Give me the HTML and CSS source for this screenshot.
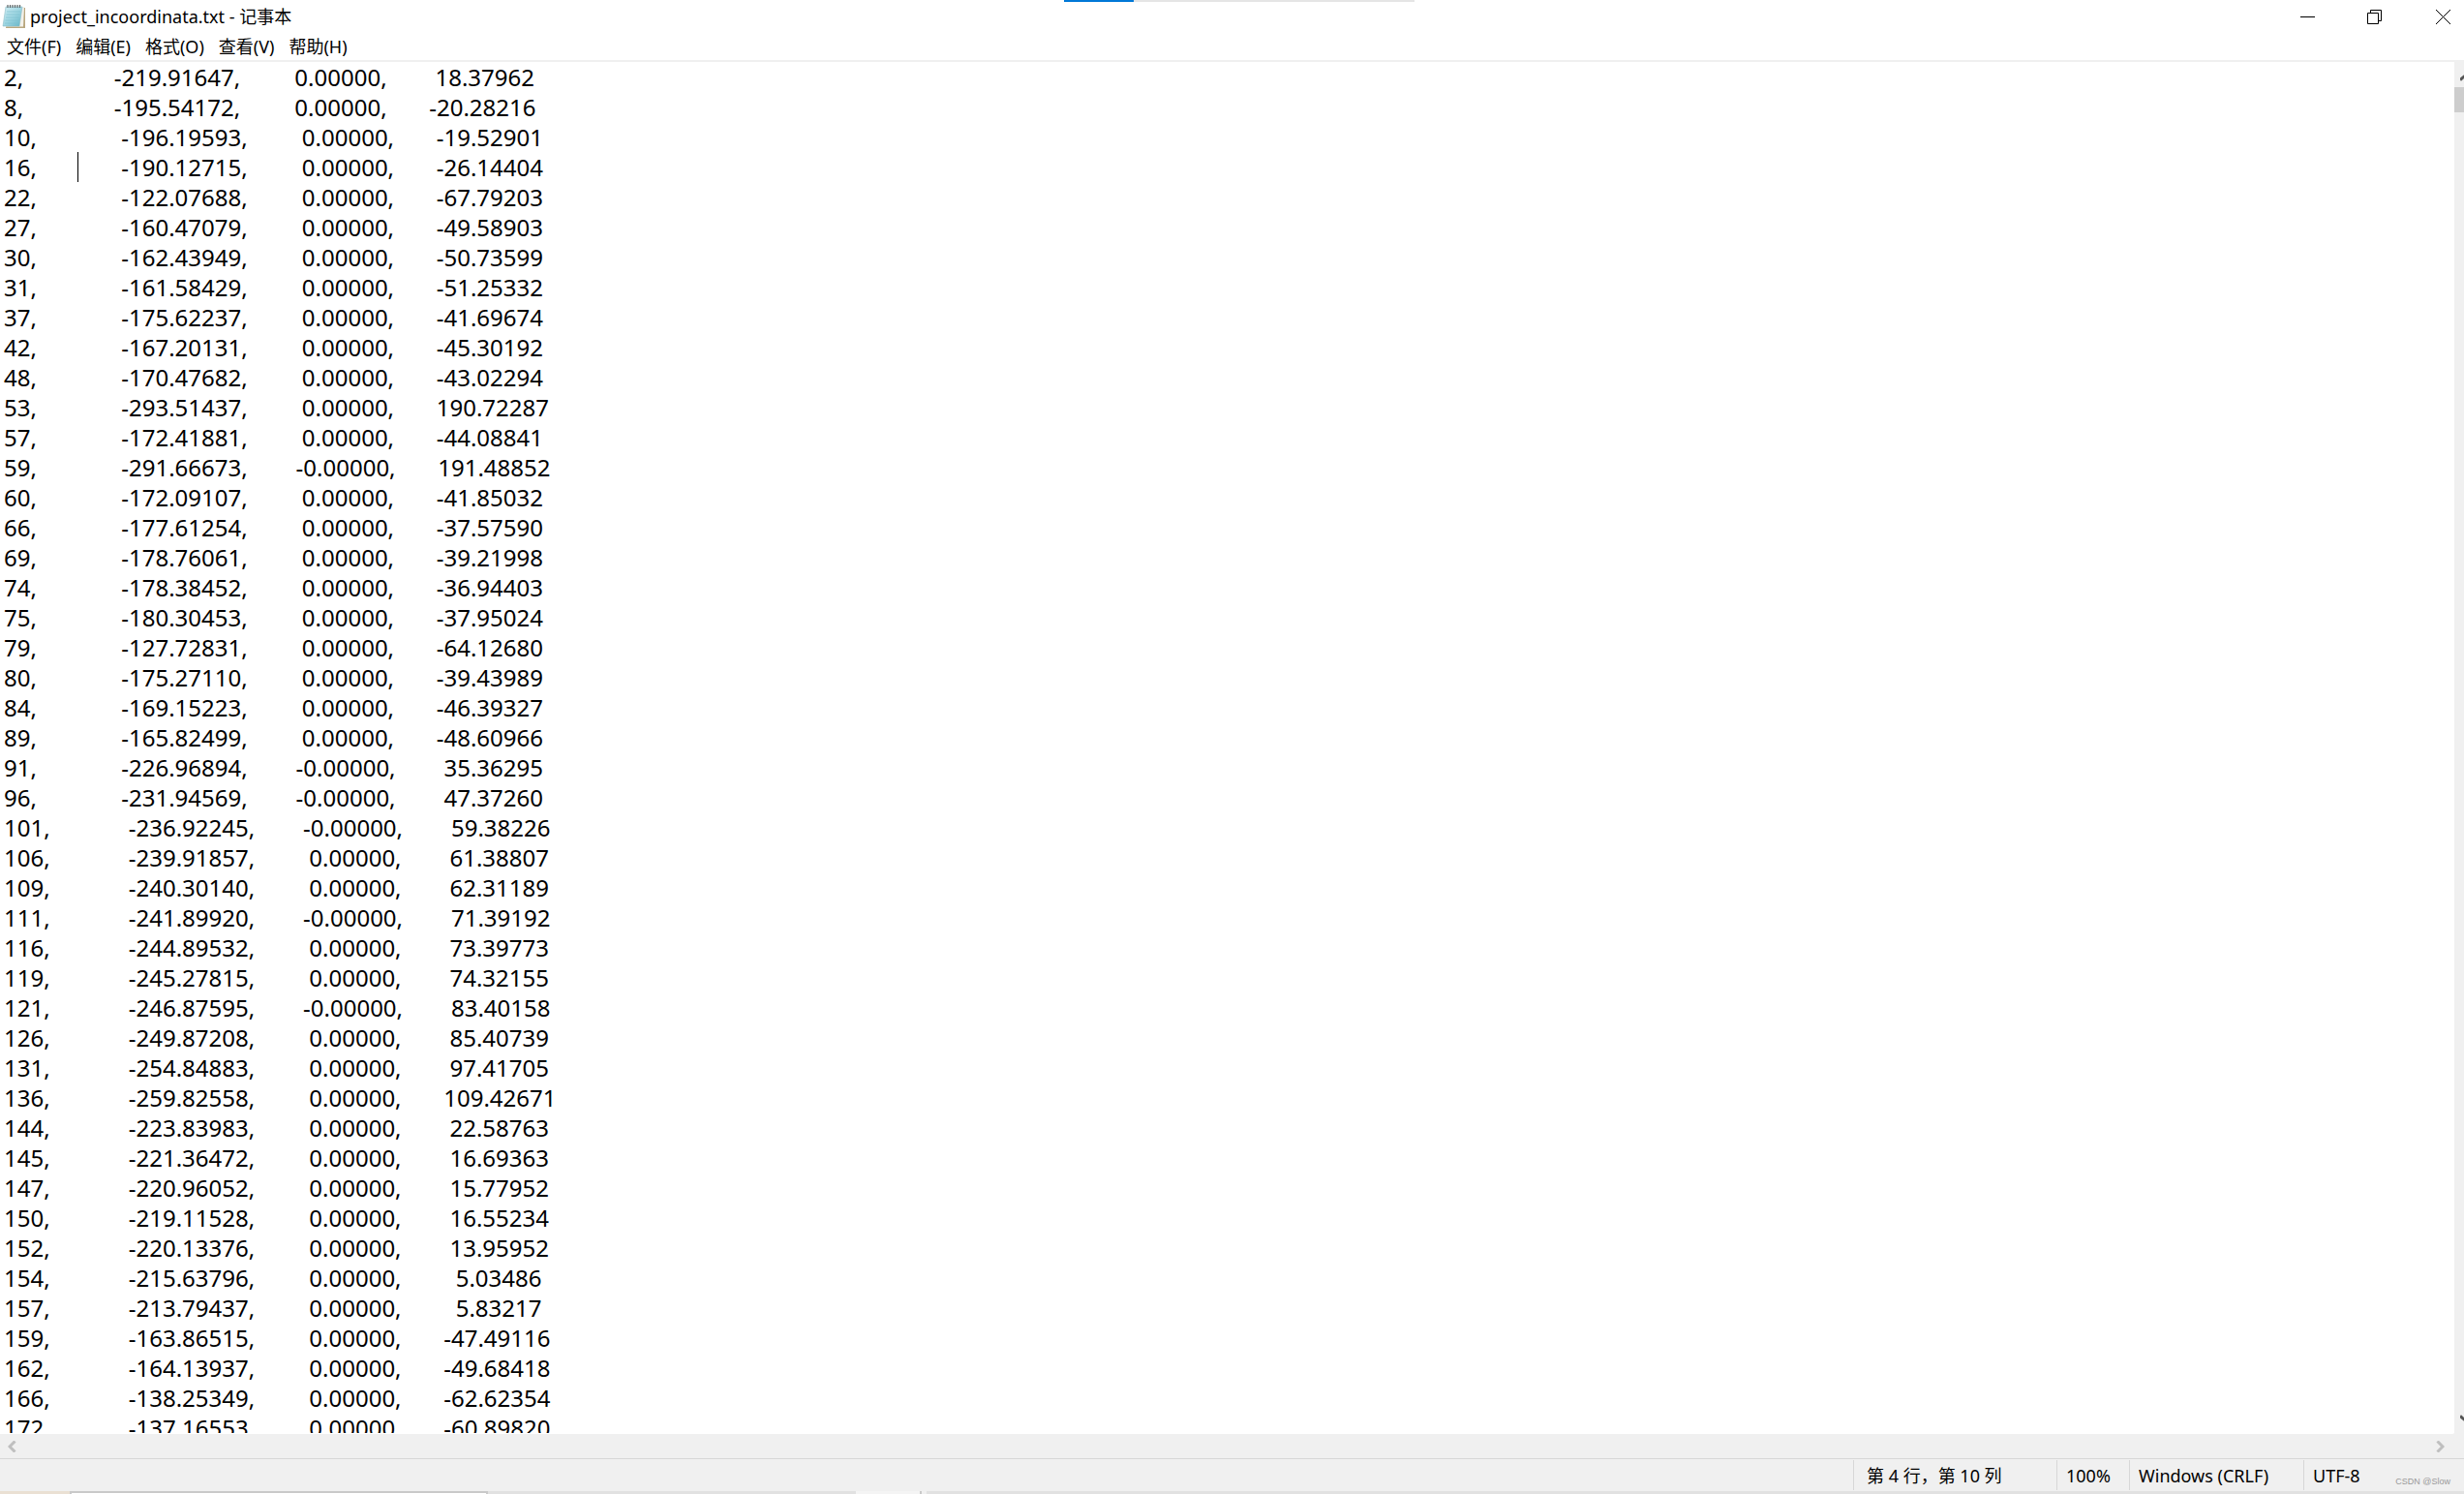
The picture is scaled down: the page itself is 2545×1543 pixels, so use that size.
FILE: index.html
```html
<!DOCTYPE html>
<html lang="zh-CN">
<head>
<meta charset="utf-8">
<title>project_incoordinata.txt - 记事本</title>
<link rel="stylesheet" href="styles.css">
</head>
<body>
<div class="loading"><div class="loading-value"></div></div>
<header class="titlebar">
  <svg class="app-icon" width="26" height="26" viewBox="0 0 26 26" aria-hidden="true">
    <defs>
      <linearGradient id="page" x1="0" y1="0" x2="1" y2="1">
        <stop offset="0" stop-color="#d3eff5"/><stop offset=".5" stop-color="#9fd6e2"/><stop offset="1" stop-color="#62b4c6"/>
      </linearGradient>
    </defs>
    <path d="M7 4 24 4 24 25 4 25Z" fill="#b9a77f"/>
    <path d="M6 3H23L22 23.500H4Z" fill="#f3f1ea"/>
    <path d="M4 3H21L18 23H1Z" fill="url(#page)" stroke="#8bbcc6" stroke-width=".6"/>
    <path d="M5 8H19M4.500 11H18.500M4 14H18M3.500 17H18M3 20H17" stroke="#7fc0ce" stroke-width=".7"/>
    <path d="M6 1V4M8.500 1V4M11 1V4M13.500 1V4M16 1V4M18.500 1V4" stroke="#5f6466" stroke-width="1.200"/>
  </svg>
  <h1 class="title">project_incoordinata.txt - 记事本</h1>
  <div class="window-buttons">
    <button class="window-button" aria-label="最小化"><svg width="15" height="15" viewBox="0 0 15 15"><path d="M0 7.500H15" /></svg></button>
    <button class="window-button" aria-label="还原"><svg width="15" height="15" viewBox="0 0 15 15"><path d="M.5 3.500H11.500V14.500H.5ZM3.500 3.500V.5H14.500V11.500H11.500"/></svg></button>
    <button class="window-button" aria-label="关闭"><svg width="15" height="15" viewBox="0 0 15 15"><path d="M0 0 15 15M15 0 0 15"/></svg></button>
  </div>
</header>
<nav class="menu">
  <button class="menu-item">文件(F)</button>
  <button class="menu-item">编辑(E)</button>
  <button class="menu-item">格式(O)</button>
  <button class="menu-item">查看(V)</button>
  <button class="menu-item">帮助(H)</button>
</nav>
<main class="workspace">
  <div class="editor">
    <textarea class="document" wrap="off" spellcheck="false" aria-label="文本编辑器">
2,               -219.91647,         0.00000,        18.37962
8,               -195.54172,         0.00000,       -20.28216
10,              -196.19593,         0.00000,       -19.52901
16,              -190.12715,         0.00000,       -26.14404
22,              -122.07688,         0.00000,       -67.79203
27,              -160.47079,         0.00000,       -49.58903
30,              -162.43949,         0.00000,       -50.73599
31,              -161.58429,         0.00000,       -51.25332
37,              -175.62237,         0.00000,       -41.69674
42,              -167.20131,         0.00000,       -45.30192
48,              -170.47682,         0.00000,       -43.02294
53,              -293.51437,         0.00000,       190.72287
57,              -172.41881,         0.00000,       -44.08841
59,              -291.66673,        -0.00000,       191.48852
60,              -172.09107,         0.00000,       -41.85032
66,              -177.61254,         0.00000,       -37.57590
69,              -178.76061,         0.00000,       -39.21998
74,              -178.38452,         0.00000,       -36.94403
75,              -180.30453,         0.00000,       -37.95024
79,              -127.72831,         0.00000,       -64.12680
80,              -175.27110,         0.00000,       -39.43989
84,              -169.15223,         0.00000,       -46.39327
89,              -165.82499,         0.00000,       -48.60966
91,              -226.96894,        -0.00000,        35.36295
96,              -231.94569,        -0.00000,        47.37260
101,             -236.92245,        -0.00000,        59.38226
106,             -239.91857,         0.00000,        61.38807
109,             -240.30140,         0.00000,        62.31189
111,             -241.89920,        -0.00000,        71.39192
116,             -244.89532,         0.00000,        73.39773
119,             -245.27815,         0.00000,        74.32155
121,             -246.87595,        -0.00000,        83.40158
126,             -249.87208,         0.00000,        85.40739
131,             -254.84883,         0.00000,        97.41705
136,             -259.82558,         0.00000,       109.42671
144,             -223.83983,         0.00000,        22.58763
145,             -221.36472,         0.00000,        16.69363
147,             -220.96052,         0.00000,        15.77952
150,             -219.11528,         0.00000,        16.55234
152,             -220.13376,         0.00000,        13.95952
154,             -215.63796,         0.00000,         5.03486
157,             -213.79437,         0.00000,         5.83217
159,             -163.86515,         0.00000,       -47.49116
162,             -164.13937,         0.00000,       -49.68418
166,             -138.25349,         0.00000,       -62.62354
172,             -137.16553,         0.00000,       -60.89820</textarea>
    <span class="caret"></span>
  </div>
  <div class="scroll-y">
    <svg class="arrow-y" width="13" height="8" viewBox="0 0 13 8"><path d="M0 6.500 6.500 1 13 6.500"/></svg>
    <div class="thumb"></div>
    <svg class="arrow-y arrow-down" width="13" height="8" viewBox="0 0 13 8"><path d="M0 1.500 6.500 7 13 1.500"/></svg>
  </div>
</main>
<div class="scroll-x">
  <svg width="9" height="12" viewBox="0 0 9 12"><path d="M7.500 .5 2 6 7.500 11.500"/></svg>
  <svg width="9" height="12" viewBox="0 0 9 12"><path d="M1.500 .5 7 6 1.500 11.500"/></svg>
</div>
<footer class="status">
  <span class="status-cell position">第 4 行，第 10 列</span>
  <span class="status-cell zoom">100%</span>
  <span class="status-cell line-ending">Windows (CRLF)</span>
  <span class="status-cell encoding">UTF-8</span>
  <span class="credit">CSDN @Slow</span>
</footer>
<div class="taskbar">
  <span class="task-start"></span><span class="task-search"></span><span class="task-space"></span><span class="task-active"></span><span class="task-edge"></span>
</div>
</body>
</html>
```

FILE: styles.css
```css
* { box-sizing: border-box; }

body {
  margin: 0;
  height: 100vh;
  display: flex;
  flex-direction: column;
  overflow: hidden;
  position: relative;
  background: #fff;
  color: #000;
  font: 18px/24px "Noto Sans", "Noto Sans CJK SC", sans-serif;
}

button {
  border: 0;
  padding: 0;
  background: none;
  color: inherit;
  font: inherit;
}

svg { display: block; flex: none; }

.loading {
  position: absolute;
  top: 0;
  left: 1099px;
  width: 362px;
  height: 2px;
  background: #e5e5e5;
}

.loading-value { width: 20%; height: 100%; background: #0078d7; }

.titlebar {
  display: flex;
  align-items: center;
  height: 34px;
  padding-left: 2px;
}

.title {
  margin: 0 0 0 3px;
  font-size: 18px;
  font-weight: 400;
}

.window-buttons { display: flex; margin-left: auto; }

.window-button {
  display: flex;
  justify-content: center;
  width: 69px;
}

.window-button:last-child {
  justify-content: flex-end;
  width: 58px;
  padding-right: 14px;
}

.window-button path { fill: none; stroke: #000; }

.menu {
  display: flex;
  gap: 15px;
  height: 30px;
  padding-left: 7px;
  border-bottom: 2px solid #f0f0f0;
}

.workspace {
  flex: 1;
  min-height: 0;
  display: flex;
  background: #f0f0f0;
}

.editor {
  flex: 1;
  position: relative;
  display: flex;
  background: #fff;
  border-bottom-right-radius: 2px;
}

.document {
  flex: 1;
  margin: 0 0 1px;
  padding: 0 0 0 4px;
  border: 0;
  outline: 0;
  resize: none;
  overflow: hidden;
  background: transparent;
  color: #000;
  font: 24px/31px "Noto Sans", "Noto Sans CJK SC", sans-serif;
  white-space: pre;
}

.caret {
  position: absolute;
  left: 80px;
  top: 93px;
  width: 1px;
  height: 31px;
  background: #000;
}

.scroll-y {
  width: 10px;
  display: flex;
  flex-direction: column;
  padding: 12px 0;
  overflow: hidden;
}

.arrow-y { margin-left: 6px; }
.arrow-y path { fill: none; stroke: #555; stroke-width: 3; }
.arrow-down { margin-top: auto; }
.thumb { height: 26px; margin-top: 6px; background: #cdcdcd; }

.scroll-x {
  display: flex;
  justify-content: space-between;
  align-items: center;
  height: 25px;
  padding: 0 20px 0 8px;
  background: #f0f0f0;
}

.scroll-x path { fill: none; stroke: #bfbfbf; stroke-width: 3; }

.status {
  display: flex;
  justify-content: flex-end;
  height: 34px;
  padding-bottom: 1px;
  position: relative;
  background: #f0f0f0;
  border-top: 1px solid #d7d7d7;
}

.status-cell {
  margin-top: 1px;
  padding-left: 9px;
  border-left: 1px solid #d7d7d7;
  line-height: 32px;
  white-space: nowrap;
}

.position { width: 210px; padding-left: 13px; }
.zoom { width: 75px; }
.line-ending { width: 180px; }
.encoding { width: 166px; }

.credit {
  position: absolute;
  right: 14px;
  bottom: 4px;
  color: #999;
  font: 9px/12px "Liberation Sans", Arial, sans-serif;
}

.taskbar { display: flex; height: 3px; background: #e1e1e1; }
.task-start { width: 72px; background: #eae0d3; }
.task-search { width: 432px; border: 2px solid #c9c9c9; border-bottom: 0; background: #fff; }
.task-space { width: 380px; }
.task-active { width: 68px; border-right: 2px solid #c9c9c9; background: #f4f4f4; }
.task-edge { width: 5px; background: #f0f0f0; }
```
